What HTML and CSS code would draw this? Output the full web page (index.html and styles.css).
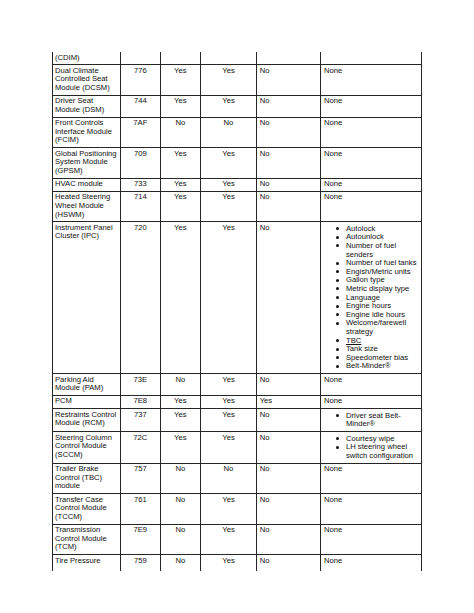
FILE: index.html
```html
<!DOCTYPE html>
<html>
<head>
<meta charset="utf-8">
<link rel="stylesheet" href="styles.css">
</head>
<body>
<div class="page">
<table class="grid">
<colgroup>
<col class="c-name"><col class="c-id"><col class="c-a"><col class="c-b"><col class="c-c"><col class="c-d">
</colgroup>
<tbody>
<tr class="first"><td>(CDIM)</td><td></td><td></td><td></td><td></td><td></td></tr>
<tr><td>Dual Climate Controlled Seat Module (DCSM)</td><td class="ctr">776</td><td class="ctr">Yes</td><td class="ctr">Yes</td><td>No</td><td>None</td></tr>
<tr><td>Driver Seat Module (DSM)</td><td class="ctr">744</td><td class="ctr">Yes</td><td class="ctr">Yes</td><td>No</td><td>None</td></tr>
<tr><td>Front Controls Interface Module (FCIM)</td><td class="ctr">7AF</td><td class="ctr">No</td><td class="ctr">No</td><td>No</td><td>None</td></tr>
<tr><td>Global Positioning System Module (GPSM)</td><td class="ctr">709</td><td class="ctr">Yes</td><td class="ctr">Yes</td><td>No</td><td>None</td></tr>
<tr><td>HVAC module</td><td class="ctr">733</td><td class="ctr">Yes</td><td class="ctr">Yes</td><td>No</td><td>None</td></tr>
<tr><td>Heated Steering Wheel Module (HSWM)</td><td class="ctr">714</td><td class="ctr">Yes</td><td class="ctr">Yes</td><td>No</td><td>None</td></tr>
<tr><td>Instrument Panel Cluster (IPC)</td><td class="ctr">720</td><td class="ctr">Yes</td><td class="ctr">Yes</td><td>No</td><td>
<ul class="items">
<li>Autolock</li>
<li>Autounlock</li>
<li>Number of fuel senders</li>
<li>Number of fuel tanks</li>
<li>Engish/Metric units</li>
<li>Gallon type</li>
<li>Metric display type</li>
<li>Language</li>
<li>Engine hours</li>
<li>Engine idle hours</li>
<li>Welcome/farewell strategy</li>
<li><span class="link">TBC</span></li>
<li>Tank size</li>
<li>Speedometer bias</li>
<li>Belt-Minder®</li>
</ul>
</td></tr>
<tr><td>Parking Aid Module (PAM)</td><td class="ctr">73E</td><td class="ctr">No</td><td class="ctr">Yes</td><td>No</td><td>None</td></tr>
<tr><td>PCM</td><td class="ctr">7E8</td><td class="ctr">Yes</td><td class="ctr">Yes</td><td>Yes</td><td>None</td></tr>
<tr><td>Restraints Control Module (RCM)</td><td class="ctr">737</td><td class="ctr">Yes</td><td class="ctr">Yes</td><td>No</td><td>
<ul class="items">
<li>Driver seat Belt-Minder®</li>
</ul>
</td></tr>
<tr><td>Steering Column Control Module (SCCM)</td><td class="ctr">72C</td><td class="ctr">Yes</td><td class="ctr">Yes</td><td>No</td><td>
<ul class="items">
<li>Courtesy wipe</li>
<li>LH steering wheel switch configuration</li>
</ul>
</td></tr>
<tr><td>Trailer Brake Control (TBC) module</td><td class="ctr">757</td><td class="ctr">No</td><td class="ctr">No</td><td>No</td><td>None</td></tr>
<tr><td>Transfer Case Control Module (TCCM)</td><td class="ctr">761</td><td class="ctr">No</td><td class="ctr">Yes</td><td>No</td><td>None</td></tr>
<tr><td>Transmission Control Module (TCM)</td><td class="ctr">7E9</td><td class="ctr">No</td><td class="ctr">Yes</td><td>No</td><td>None</td></tr>
<tr class="cut"><td>Tire Pressure</td><td class="ctr">759</td><td class="ctr">No</td><td class="ctr">Yes</td><td>No</td><td>None</td></tr>
</tbody>
</table>
</div>
</body>
</html>
```
FILE: styles.css
```css
html, body {
  margin: 0;
  padding: 0;
  background: #ffffff;
}
.page {
  width: 474px;
  height: 613px;
  box-sizing: border-box;
  padding: 52px 0 0 51.5px;
  overflow: hidden;
  font-family: "Liberation Sans", Arial, sans-serif;
  font-size: 7.65px;
  line-height: 8.6px;
  color: #111111;
}
.grid {
  border-collapse: collapse;
  table-layout: fixed;
  width: 370.7px;
}
.c-name { width: 68.3px; }
.c-id { width: 40px; }
.c-a { width: 40px; }
.c-b { width: 56.4px; }
.c-c { width: 64.3px; }
.c-d { width: 100.7px; }
.grid td {
  border: 1px solid #262626;
  padding: 1.5px 2.5px 2.2px 2.5px;
  vertical-align: top;
  text-align: left;
}
.grid td.ctr {
  text-align: center;
  padding-left: 1px;
  padding-right: 1px;
}
.grid tr.first td {
  border-top: none;
}
.grid tr.cut td {
  border-bottom: none;
  height: 12.8px;
}
.items {
  list-style: none;
  margin: 1px 0 0 0;
  padding: 0 0 0 22px;
}
.items li::before {
  content: "";
  display: inline-block;
  width: 3px;
  height: 3px;
  border-radius: 50%;
  background: #111111;
  margin-left: -9.5px;
  margin-right: 6.5px;
  vertical-align: middle;
}
.link {
  text-decoration: underline;
}
```
